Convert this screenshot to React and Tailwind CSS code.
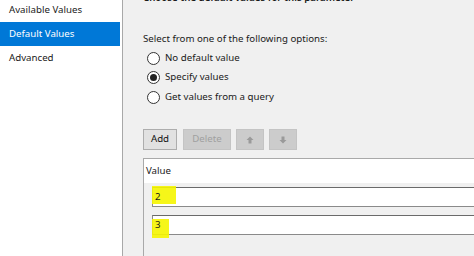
const FONT = "font-['Segoe_UI','Noto_Sans',sans-serif]";

const NAV = ["Available Values", "Default Values", "Advanced"];
const OPTIONS = [
  { label: "No default value", checked: false },
  { label: "Specify values", checked: true },
  { label: "Get values from a query", checked: false },
];
const VALUES = [
  { v: "2", hl: "w-[24px] -top-[2px] h-[18px]" },
  { v: "3", hl: "w-[17px] top-[3px] h-[19px]" },
];

function Radio({ checked }) {
  return (
    <span className="w-[13px] h-[13px] rounded-full border border-[#333] bg-white flex items-center justify-center shrink-0">
      {checked && <span className="w-[7px] h-[7px] rounded-full bg-[#222]" />}
    </span>
  );
}

function Arrow({ down }) {
  return (
    <svg width="8" height="8" viewBox="0 0 8 8" className={down ? "rotate-180" : ""}>
      <path d="M4 0.5 L7.5 4 L5.5 4 L5.5 7.5 L2.5 7.5 L2.5 4 L0.5 4 Z" fill="#9a9a9a" />
    </svg>
  );
}

export default function App() {
  return (
    <div className={`${FONT} w-[474px] h-[256px] flex overflow-hidden text-[9.7px] text-[#1a1a1a] bg-white`}>
      {/* left nav */}
      <div className="w-[123px] shrink-0 bg-white border-r border-[#a8a8a8]">
        {NAV.map((n) => (
          <div
            key={n}
            className={`h-[24px] pl-[9px] pr-2 flex items-center leading-none ${
              n === "Default Values" ? "bg-[#0078d7] text-white mr-[2px]" : ""
            } ${n === "Available Values" ? "-mt-[2px]" : ""}`}
          >
            {n}
          </div>
        ))}
      </div>

      {/* content */}
      <div className="flex-1 min-w-0 bg-[#f0f0f0] pl-[20px] flex flex-col">
        <div className="-mt-[10px] leading-[16px] font-semibold whitespace-nowrap">
          Choose the default values for this parameter
        </div>

        <div className="mt-[25px] leading-[16px]">Select from one of the following options:</div>

        <div className="mt-[1.5px] pl-[4px] flex flex-col">
          {OPTIONS.map((o) => (
            <label key={o.label} className="h-[19.5px] flex items-center gap-[5px]">
              <Radio checked={o.checked} />
              <span>{o.label}</span>
            </label>
          ))}
        </div>

        <div className="mt-[22px] flex h-[21px] shrink-0">
          <button className="w-[34px] bg-[#e1e1e1] border border-[#adadad] text-[#111]">Add</button>
          <button className="ml-[6px] w-[48px] bg-[#cccccc] border border-[#c4c4c4] text-[#a0a0a0]">Delete</button>
          <button className="ml-[5px] w-[28px] bg-[#cccccc] border border-[#c4c4c4] flex items-center justify-center">
            <Arrow />
          </button>
          <button className="ml-[5px] w-[28px] bg-[#cccccc] border border-[#c4c4c4] flex items-center justify-center">
            <Arrow down />
          </button>
        </div>

        <div className="mt-[8px] flex-1 border-l border-t border-[#a9a9a9] bg-[#f0f0f0] flex flex-col">
          <div className="h-[24px] bg-white pl-[2px] flex items-center">Value</div>
          <div className="pl-[8px] pt-[4px] -mr-[10px] flex flex-col gap-[8px]">
            {VALUES.map((r) => (
              <div key={r.v} className="relative h-[20px] bg-white border border-[#8a8a8a] border-t-[#6a6a6a] flex items-center">
                <span className={`absolute -left-[1px] ${r.hl} bg-[#f5f500] opacity-90`} />
                <span className="relative pl-[2px]">{r.v}</span>
              </div>
            ))}
          </div>
        </div>
      </div>
    </div>
  );
}
